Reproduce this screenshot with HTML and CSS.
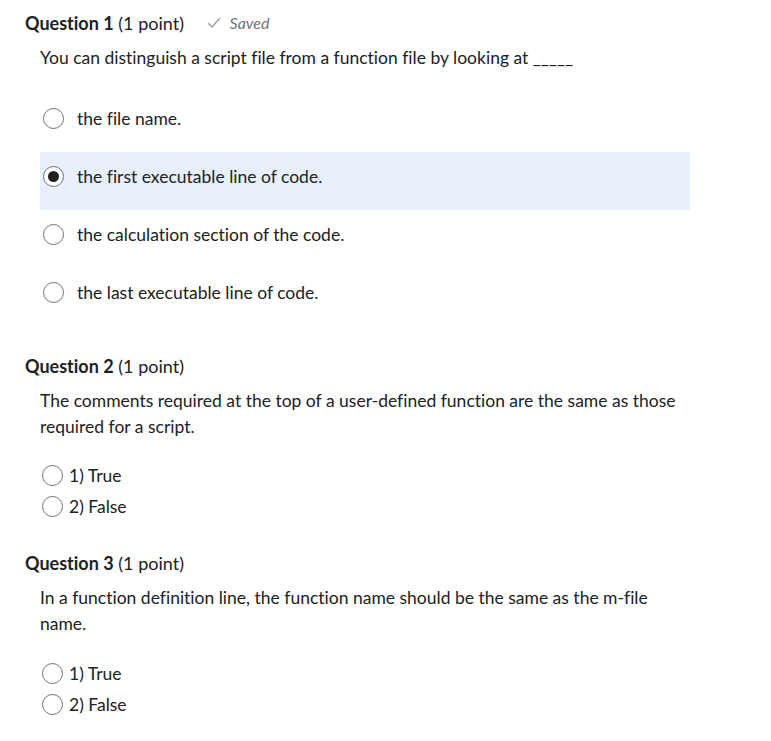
FILE: index.html
```html
<!DOCTYPE html>
<html>
<head>
<meta charset="utf-8">
<link rel="stylesheet" href="styles.css">
</head>
<body>
<div class="page">
  <section class="question q1">
    <h2 class="qhead"><strong>Question 1</strong> (1 point) <span class="saved"><svg class="check" viewBox="0 0 14 12" width="14" height="12"><path d="M1.5 6.5 L5 10 L12.5 1.5" fill="none" stroke="#a3a6a8" stroke-width="1.6" stroke-linecap="round" stroke-linejoin="round"/></svg><em>Saved</em></span></h2>
    <p class="qtext">You can distinguish a script file from a function file by looking at _____</p>
    <div class="choices">
      <label class="choice"><span class="radio"></span>the file name.</label>
      <label class="choice selected"><span class="radio checked"></span>the first executable line of code.</label>
      <label class="choice"><span class="radio"></span>the calculation section of the code.</label>
      <label class="choice"><span class="radio"></span>the last executable line of code.</label>
    </div>
  </section>
  <section class="question q2">
    <h2 class="qhead"><strong>Question 2</strong> (1 point)</h2>
    <p class="qtext">The comments required at the top of a user-defined function are the same as those required for a script.</p>
    <div class="tf">
      <label class="tfopt"><span class="radio"></span>1) True</label>
      <label class="tfopt"><span class="radio"></span>2) False</label>
    </div>
  </section>
  <section class="question q3">
    <h2 class="qhead"><strong>Question 3</strong> (1 point)</h2>
    <p class="qtext">In a function definition line, the function name should be the same as the m-file name.</p>
    <div class="tf">
      <label class="tfopt"><span class="radio"></span>1) True</label>
      <label class="tfopt"><span class="radio"></span>2) False</label>
    </div>
  </section>
</div>
</body>
</html>
```
FILE: styles.css
```css
* { box-sizing: border-box; }
html, body { margin: 0; padding: 0; background: #ffffff; }
body {
  font-family: Lato, "Noto Sans", sans-serif;
  color: #202122;
  font-size: 17.5px;
  font-variant-ligatures: none;
  font-feature-settings: "liga" 0;
}
.page {
  padding: 11px 0 0 25px;
  width: 771px;
}
.question { display: flex; flex-direction: column; }
.qhead {
  margin: 0;
  font-size: 18px;
  font-weight: 400;
  line-height: 24px;
  display: flex;
  align-items: center;
  white-space: pre;
}
.qhead strong { font-weight: 700; }
.saved {
  display: inline-flex;
  align-items: center;
  margin-left: 18px;
  color: #6f7377;
  font-size: 16px;
}
.saved .check { margin-right: 9px; }
.qtext {
  margin: 10px 0 0 15px;
  line-height: 25.5px;
  max-width: 650px;
}
.q1 .qtext { line-height: 24px; margin-top: 11px; }
.choices {
  margin: 24px 0 0 15px;
  width: 650px;
  display: flex;
  flex-direction: column;
}
.choice {
  display: flex;
  align-items: center;
  height: 58px;
  padding: 0 0 10px 3px;
  gap: 13px;
}
.choice.selected { background: #e8f1fb; }
.radio {
  width: 21px;
  height: 21px;
  border: 1.3px solid #6e7174;
  border-radius: 50%;
  background: #fff;
  flex: none;
  display: inline-flex;
  align-items: center;
  justify-content: center;
}
.radio.checked::after {
  content: "";
  width: 11px;
  height: 11px;
  border-radius: 50%;
  background: #1f2021;
}
.q2 { margin-top: 28px; }
.q3 { margin-top: 33px; }
.tf {
  margin: 24px 0 0 17px;
  display: flex;
  flex-direction: column;
  gap: 7px;
}
.q3 .tf { margin-top: 25px; }
.tfopt {
  display: flex;
  align-items: center;
  height: 24px;
  gap: 6px;
}
```
